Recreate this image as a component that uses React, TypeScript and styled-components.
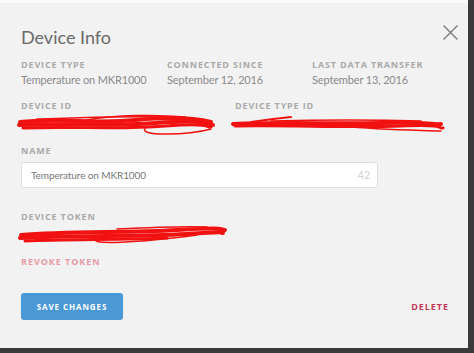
import React from "react";
import styled, { createGlobalStyle } from "styled-components";

const Global = createGlobalStyle`
  html, body {
    margin: 0;
    padding: 0;
    background: #3a3a3a;
  }
  * {
    box-sizing: border-box;
  }
`;

const Frame = styled.div`
  width: 474px;
  height: 353px;
  background: #3a3a3a;
  overflow: hidden;
`;

const Panel = styled.div`
  position: relative;
  width: 468px;
  height: 348px;
  background: #f2f2f2;
  border-top: 3px solid #fbfbfb;
  padding: 23px 19px 0 21px;
  font-family: Lato, "Open Sans", "Liberation Sans", sans-serif;
  display: flex;
  flex-direction: column;
`;

const Title = styled.h1`
  margin: 0;
  font-size: 18px;
  line-height: 22px;
  font-weight: 400;
  color: #6a6a6a;
`;

const Close = styled.button`
  position: absolute;
  top: 21px;
  right: 9px;
  width: 17px;
  height: 17px;
  padding: 0;
  border: none;
  background: none;
  cursor: pointer;
`;

const Row = styled.div<{ cols: string; top: number }>`
  display: grid;
  grid-template-columns: ${(p) => p.cols};
  margin-top: ${(p) => p.top}px;
`;

const Field = styled.div`
  display: flex;
  flex-direction: column;
`;

const Label = styled.div`
  font-family: "Open Sans", "Liberation Sans", sans-serif;
  font-size: 9px;
  line-height: 12px;
  font-weight: 700;
  letter-spacing: 0.85px;
  text-transform: uppercase;
  color: #a9a9a9;
`;

const Value = styled.div`
  font-size: 11px;
  line-height: 15px;
  color: #8a8a8a;
  letter-spacing: -0.15px;
  margin-top: 1px;
`;

const Scribble = styled.svg`
  display: block;
  margin-left: -4px;
`;

const InputWrap = styled.div`
  position: relative;
  width: 357px;
  height: 26px;
  margin-top: 5px;
`;

const Input = styled.input`
  width: 100%;
  height: 100%;
  border: 1px solid #dedede;
  border-radius: 3px;
  background: #fff;
  padding: 0 30px 0 9px;
  font-family: Lato, "Open Sans", "Liberation Sans", sans-serif;
  font-size: 10px;
  letter-spacing: -0.1px;
  color: #777;
  outline: none;
`;

const Counter = styled.span`
  position: absolute;
  right: 8px;
  top: 6px;
  font-size: 10.5px;
  line-height: 14px;
  color: #cfcfcf;
`;

const LinkText = styled.span<{ tone: string }>`
  font-family: "Open Sans", "Liberation Sans", sans-serif;
  font-size: 9px;
  line-height: 12px;
  font-weight: 700;
  letter-spacing: 0.95px;
  color: ${(p) => p.tone};
  cursor: pointer;
`;

const Footer = styled.div`
  display: flex;
  align-items: center;
  justify-content: space-between;
  margin-top: 25px;
`;

const SaveButton = styled.button`
  width: 102px;
  height: 27px;
  border: none;
  border-radius: 3px;
  background: #4a98d6;
  color: #fff;
  font-family: "Open Sans", "Liberation Sans", sans-serif;
  font-size: 8px;
  font-weight: 700;
  letter-spacing: 0.9px;
  cursor: pointer;
`;

function IdScribble({ width }: { width: number }) {
  return (
    <Scribble width={width} height={26} viewBox="0 0 200 26">
      <g fill="none" stroke="#f21111" strokeLinecap="round" strokeLinejoin="round">
        <path d="M3 10 C40 6 80 12 120 8 S180 6 196 10" strokeWidth={4} />
        <path d="M2 13 C50 11 90 15 140 11 S185 12 198 13" strokeWidth={4} />
        <path d="M6 16 C60 14 100 18 150 14 S190 16 196 15" strokeWidth={3} />
        <path d="M70 8 C100 3 140 2 170 5" strokeWidth={1.5} />
        <path d="M130 16 C120 24 170 24 196 17" strokeWidth={1.5} />
        <path d="M20 7 C60 6 100 4 150 5" strokeWidth={1.5} />
      </g>
    </Scribble>
  );
}

function TypeScribble({ width }: { width: number }) {
  return (
    <Scribble width={width} height={26} viewBox="0 0 214 26">
      <g fill="none" stroke="#f21111" strokeLinecap="round" strokeLinejoin="round">
        <path d="M2 12 C50 10 100 12 150 11 S200 13 210 12" strokeWidth={4} />
        <path d="M4 14 C60 13 120 16 170 14 S205 17 212 16" strokeWidth={3} />
        <path d="M20 10 C40 7 50 6 60 5" strokeWidth={2} />
        <path d="M110 14 C150 18 180 18 210 19" strokeWidth={1.5} />
        <path d="M40 9 C80 8 120 7 190 9" strokeWidth={1.5} />
      </g>
    </Scribble>
  );
}

function TokenScribble() {
  return (
    <Scribble width={212} height={26} viewBox="0 0 212 26">
      <g fill="none" stroke="#f21111" strokeLinecap="round" strokeLinejoin="round">
        <path d="M4 12 C50 8 110 10 160 7 S200 6 208 7" strokeWidth={4} />
        <path d="M3 15 C60 12 120 14 170 11 S200 10 206 10" strokeWidth={4} />
        <path d="M8 18 C50 16 100 17 150 15" strokeWidth={3} />
        <path d="M80 16 C70 22 120 20 180 12" strokeWidth={1.5} />
        <path d="M100 6 C140 4 170 3 190 4" strokeWidth={1.5} />
      </g>
    </Scribble>
  );
}

export default function App() {
  return (
    <>
      <Global />
      <Frame>
        <Panel>
          <Title>Device Info</Title>
          <Close aria-label="close">
            <svg width="17" height="17" viewBox="0 0 17 17">
              <path d="M1.5 1.5 L15.5 15.5 M15.5 1.5 L1.5 15.5" stroke="#7a7a7a" strokeWidth="1.4" fill="none" />
            </svg>
          </Close>

          <Row cols="146px 145px 1fr" top={11}>
            <Field>
              <Label>Device Type</Label>
              <Value>Temperature on MKR1000</Value>
            </Field>
            <Field>
              <Label>Connected Since</Label>
              <Value>September 12, 2016</Value>
            </Field>
            <Field>
              <Label>Last Data Transfer</Label>
              <Value>September 13, 2016</Value>
            </Field>
          </Row>

          <Row cols="214px 1fr" top={13}>
            <Field>
              <Label>Device ID</Label>
              <IdScribble width={198} />
            </Field>
            <Field>
              <Label>Device Type ID</Label>
              <TypeScribble width={214} />
            </Field>
          </Row>

          <Row cols="1fr" top={7}>
            <Field>
              <Label>Name</Label>
              <InputWrap>
                <Input defaultValue="Temperature on MKR1000" />
                <Counter>42</Counter>
              </InputWrap>
            </Field>
          </Row>

          <Row cols="1fr" top={23}>
            <Field>
              <Label>Device Token</Label>
              <TokenScribble />
            </Field>
          </Row>

          <Row cols="1fr" top={7}>
            <LinkText tone="#e69aa6">REVOKE TOKEN</LinkText>
          </Row>

          <Footer>
            <SaveButton>SAVE CHANGES</SaveButton>
            <LinkText tone="#c23a5a">DELETE</LinkText>
          </Footer>
        </Panel>
      </Frame>
    </>
  );
}
